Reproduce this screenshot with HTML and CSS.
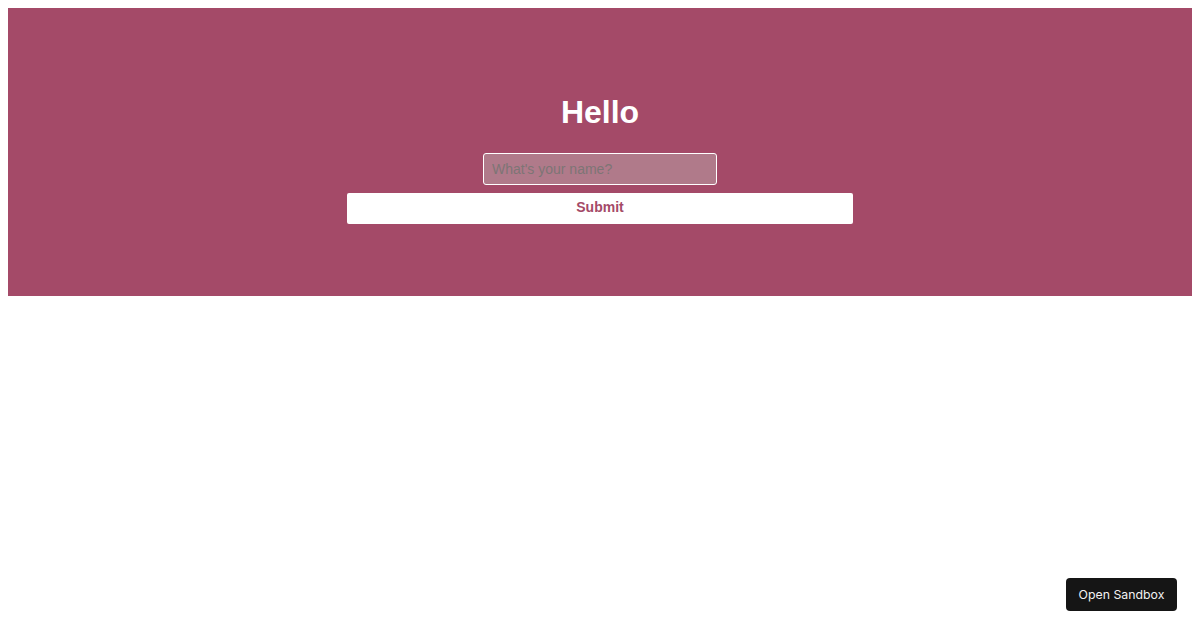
FILE: index.html
```html
<!DOCTYPE html>
<html>
<head>
<meta charset="utf-8">
<link rel="stylesheet" href="styles.css">
</head>
<body>
<section class="banner">
  <h1 class="title">Hello</h1>
  <form class="form">
    <input class="name-input" type="text" placeholder="What's your name?">
    <button class="submit" type="button">Submit</button>
  </form>
</section>
<a class="sandbox-btn">Open Sandbox</a>
</body>
</html>
```
FILE: styles.css
```css
html, body {
  margin: 0;
  padding: 0;
  background: #ffffff;
}
body {
  margin: 8px;
  font-family: "Liberation Sans", Arial, sans-serif;
}
.banner {
  background: #a44a68;
  height: 288px;
  box-sizing: border-box;
  padding-top: 86px;
  display: flex;
  flex-direction: column;
  align-items: center;
}
.title {
  margin: 0;
  color: #ffffff;
  font-size: 32px;
  font-weight: bold;
  line-height: 37px;
}
.form {
  margin-top: 22px;
  display: flex;
  flex-direction: column;
  align-items: center;
  gap: 8px;
}
.name-input {
  box-sizing: border-box;
  width: 234px;
  height: 32px;
  border: 1px solid #ffffff;
  border-radius: 3px;
  background: #b07a8a;
  padding: 0 8px;
  font-family: "Liberation Sans", Arial, sans-serif;
  font-size: 14px;
  color: #333;
  outline: none;
}
.name-input::placeholder {
  color: #7d7575;
}
.submit {
  box-sizing: border-box;
  width: 506px;
  height: 31px;
  border: none;
  border-radius: 2px;
  background: #ffffff;
  color: #a44a68;
  font-family: "Liberation Sans", Arial, sans-serif;
  font-weight: bold;
  font-size: 14px;
  padding: 0 0 4px 0;
}
.sandbox-btn {
  position: fixed;
  right: 23px;
  bottom: 19px;
  width: 111px;
  height: 33px;
  box-sizing: border-box;
  background: #151515;
  color: #f2f2f2;
  border-radius: 4px;
  font-family: Inter, "Liberation Sans", sans-serif;
  font-size: 12.3px;
  display: flex;
  align-items: center;
  justify-content: center;
}
```
